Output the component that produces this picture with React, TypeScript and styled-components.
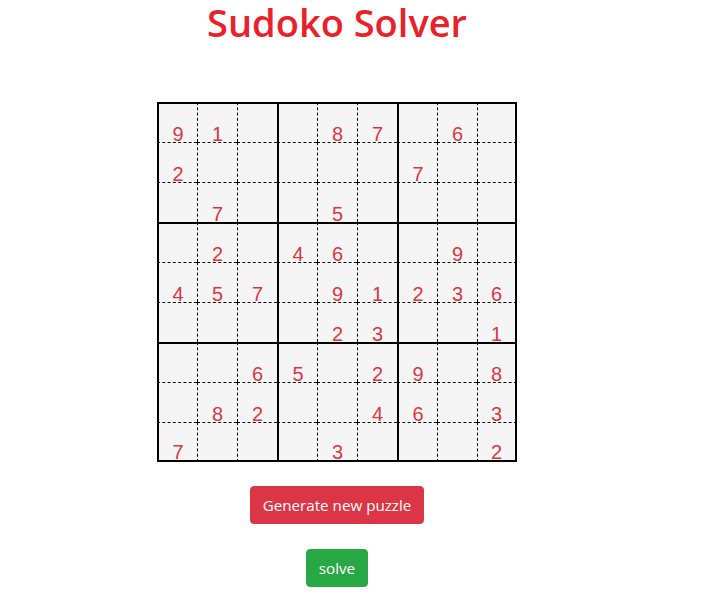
import styled, { createGlobalStyle } from "styled-components";

const puzzle = [
  "91..87.6.",
  "2.....7..",
  ".7..5....",
  ".2.46..9.",
  "457.91236",
  "....23..1",
  "..65.29.8",
  ".82..46.3",
  "7...3...2",
];

const GlobalStyle = createGlobalStyle`
  body {
    margin: 0;
    background: #fff;
    font-family: "Open Sans", "Noto Sans", sans-serif;
  }
`;

const App = () => {
  return (
    <>
      <GlobalStyle />
      <Page>
        <Title>Sudoko Solver</Title>
        <Board>
          {puzzle.map((row, r) =>
            row.split("").map((ch, c) => (
              <Cell key={`${r}-${c}`} $row={r} $col={c}>
                {ch === "." ? "" : ch}
              </Cell>
            ))
          )}
        </Board>
        <Button $variant="danger">Generate new puzzle</Button>
        <Button $variant="success">solve</Button>
      </Page>
    </>
  );
};

export default App;

const Page = styled.div`
  width: 674px;
  display: flex;
  flex-direction: column;
  align-items: center;
`;

const Title = styled.h1`
  margin: 0 0 58px;
  padding-top: 1px;
  color: #e8212b;
  font-size: 38px;
  font-weight: 600;
  line-height: 43px;
`;

const Board = styled.div`
  display: grid;
  grid-template-columns: repeat(9, 40px);
  grid-template-rows: repeat(9, 40px);
  background: #f5f5f5;
  margin-bottom: 24px;
`;

const Cell = styled.div<{ $row: number; $col: number }>`
  box-sizing: border-box;
  display: flex;
  align-items: flex-end;
  justify-content: center;
  font-family: "Liberation Sans", Arial, sans-serif;
  font-size: 20px;
  line-height: 16px;
  color: #dc3545;
  border-left: ${(p) => (p.$col % 3 === 0 ? "2px solid #000" : "1px dashed #000")};
  border-top: ${(p) => (p.$row % 3 === 0 ? "2px solid #000" : "1px dashed #000")};
  border-right: ${(p) => (p.$col === 8 ? "2px solid #000" : "none")};
  border-bottom: ${(p) => (p.$row === 8 ? "2px solid #000" : "none")};
`;

const Button = styled.button<{ $variant: "danger" | "success" }>`
  font-family: "Open Sans", "Noto Sans", sans-serif;
  font-size: 15.2px;
  line-height: 24px;
  color: #fff;
  background: ${(p) => (p.$variant === "danger" ? "#dc3545" : "#28a745")};
  border: 1px solid ${(p) => (p.$variant === "danger" ? "#dc3545" : "#28a745")};
  border-radius: 4px;
  padding: 6px 12px;
  margin-bottom: 25px;
  cursor: pointer;
`;
